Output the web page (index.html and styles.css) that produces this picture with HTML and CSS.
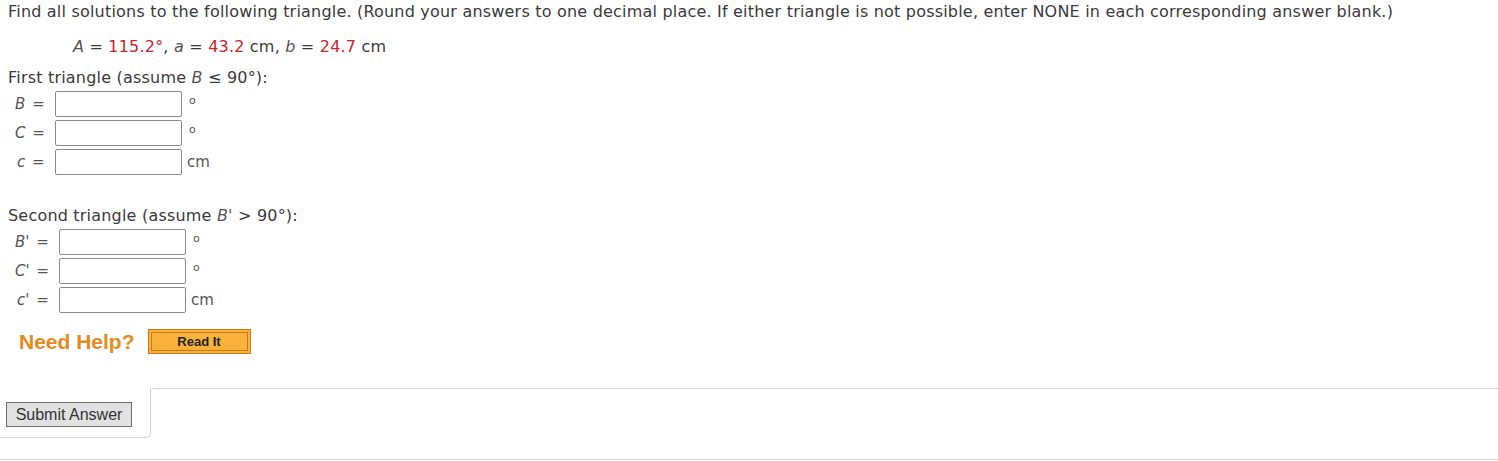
FILE: index.html
```html
<!DOCTYPE html>
<html>
<head>
<meta charset="utf-8">
<link rel="stylesheet" href="styles.css">
</head>
<body>
<div class="page">
  <p class="q">Find all solutions to the following triangle. (Round your answers to one decimal place. If either triangle is not possible, enter NONE in each corresponding answer blank.)</p>
  <p class="given"><i>A</i> = <span class="red">115.2°</span>, <i>a</i> = <span class="red">43.2</span> cm, <i>b</i> = <span class="red">24.7</span> cm</p>
  <p class="head">First triangle (assume <i>B</i> ≤ 90°):</p>
  <div class="rows">
    <div class="row"><span class="lbl"><i>B</i> =</span><span class="box"></span><span class="deg">o</span></div>
    <div class="row"><span class="lbl"><i>C</i> =</span><span class="box"></span><span class="deg">o</span></div>
    <div class="row"><span class="lbl lc"><i>c</i> =</span><span class="box"></span><span class="unit">cm</span></div>
  </div>
  <p class="head second">Second triangle (assume <i>B'</i> &gt; 90°):</p>
  <div class="rows">
    <div class="row"><span class="lbl w2"><i>B'</i> =</span><span class="box"></span><span class="deg">o</span></div>
    <div class="row"><span class="lbl w2"><i>C'</i> =</span><span class="box"></span><span class="deg">o</span></div>
    <div class="row"><span class="lbl w2 lc"><i>c'</i> =</span><span class="box"></span><span class="unit">cm</span></div>
  </div>
  <div class="help">
    <span class="need">Need Help?</span>
    <span class="readit"><span class="inner">Read It</span></span>
  </div>
  <div class="footer">
    <div class="tab"><span class="submit">Submit Answer</span></div>
    <div class="rest"></div>
  </div>
  <div class="bottomline"></div>
</div>
</body>
</html>
```
FILE: styles.css
```css
html, body { margin: 0; padding: 0; background: #fff; }
.page {
  font-family: "DejaVu Sans", Verdana, sans-serif;
  color: #3a3a3a;
  font-size: 16px;
  letter-spacing: 0.2px;
}
p { margin: 0; }
.q { padding: 2px 0 0 8px; height: 28px; line-height: 20px; }
.given { padding: 2px 0 0 73px; height: 31px; line-height: 30px; }
.red { color: #cc2229; }
i { color: #555; }
.head { padding-top: 5px; line-height: 20px; height: 23px; padding-left: 8px; }
.rows { display: flex; flex-direction: column; gap: 3px; }
.row { display: flex; align-items: flex-start; height: 26px; }
.lbl { width: 40px; padding-left: 15px; font-size: 15px; letter-spacing: 0; word-spacing: 2px; line-height: 26px; color: #555; }
.lbl.lc { padding-left: 17px; width: 38px; }
.lbl.w2 { width: 44px; }
.lbl.w2.lc { width: 42px; }
.box { border: 1px solid #8a8a8a; border-radius: 2px; background: #fff; box-sizing: border-box; height: 26px; width: 127px; }
.deg { font-size: 11px; margin-left: 7px; margin-top: 3px; color: #555; }
.unit { margin-left: 5px; font-size: 15px; line-height: 26px; color: #555; letter-spacing: 0; }
.second { margin-top: 27px; padding-top: 4px; height: 23px; }
.help { display: flex; align-items: center; gap: 13px; margin-top: 16px; padding-left: 19px; height: 25px; }
.need { font-family: "Liberation Sans", Arial, sans-serif; font-weight: bold; font-size: 21px; letter-spacing: 0; color: #e8891c; }
.readit {
  display: flex; width: 103px; height: 25px; border: 1px solid #c77a1a;
  background: #fbb23a; padding: 2px; box-sizing: border-box;
}
.inner {
  flex: 1; border: 1px solid #c77a1a; display: flex; align-items: center; justify-content: center;
  font-family: "Liberation Sans", Arial, sans-serif; font-weight: bold; font-size: 13px; letter-spacing: 0; color: #222;
}
.footer { display: flex; margin-top: 34px; }
.tab {
  width: 151px; height: 50px; box-sizing: border-box;
  border-right: 1px solid #d4d4d4; border-bottom: 1px solid #d4d4d4; border-radius: 0 0 5px 0;
  padding: 14px 0 0 6px;
}
.submit {
  display: inline-block; width: 126px; height: 25px; box-sizing: border-box;
  background: #e1e1e1; border: 1px solid #6e6e6e;
  font-family: "Liberation Sans", Arial, sans-serif; font-size: 16px; letter-spacing: 0; color: #333;
  text-align: center; line-height: 23px;
}
.rest { flex: 1; height: 50px; border-top: 1px solid #d4d4d4; border-top-left-radius: 5px; margin-left: -1px; }
.bottomline { margin-top: 20px; height: 1px; background: #d8d8d8; }
```
